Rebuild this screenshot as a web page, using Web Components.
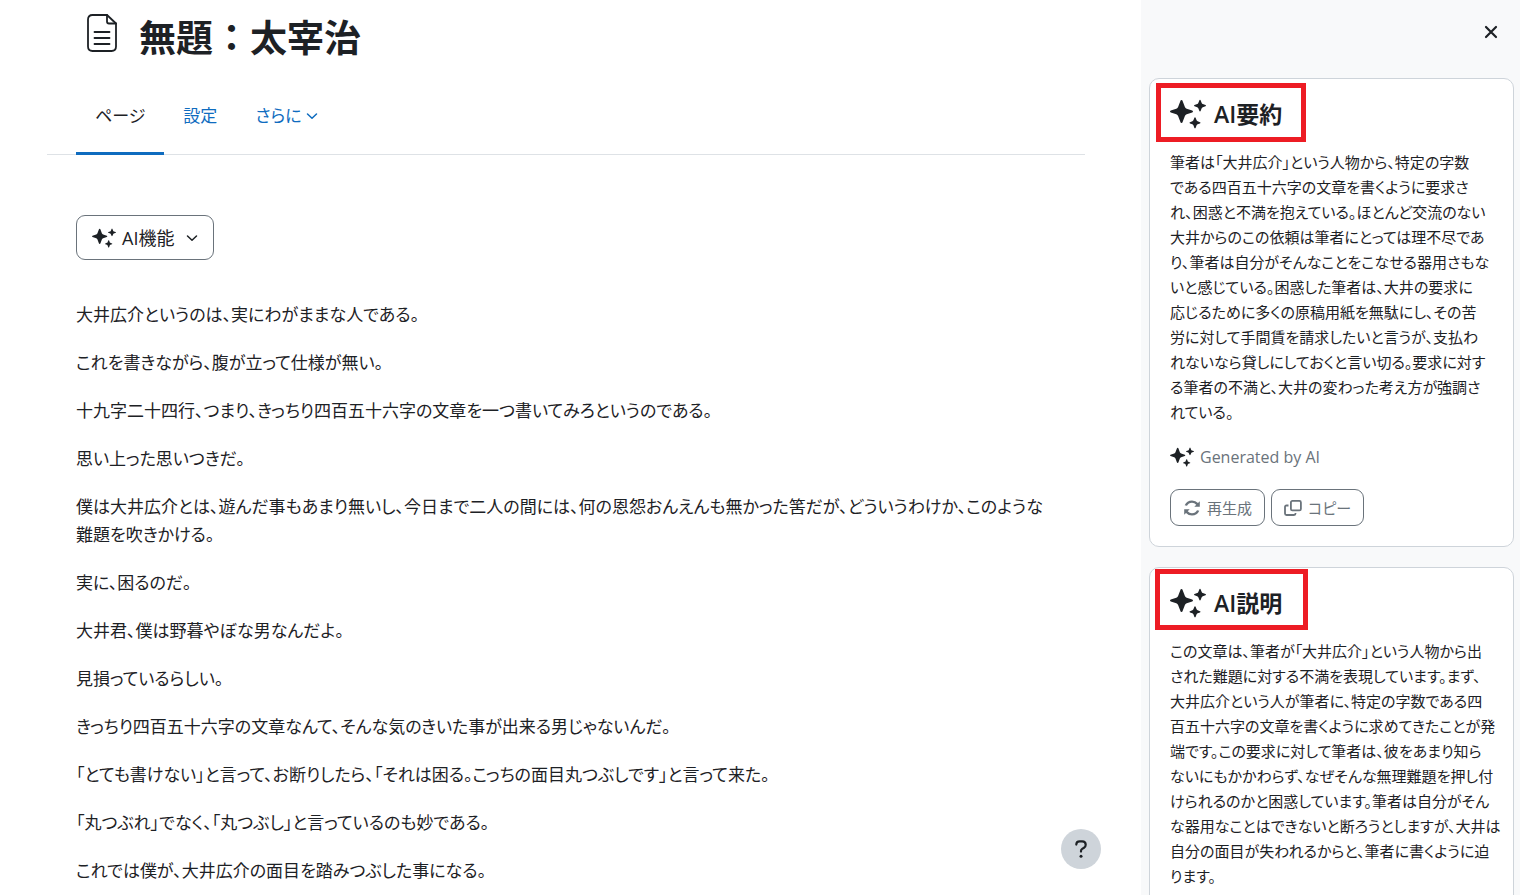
<!DOCTYPE html>
<html lang="ja">
<head>
<meta charset="utf-8">
<title>無題：太宰治</title>
<style>
    body {
        margin: 0;
        color: #1d2125;
        background: #fff;
        font-family: "Open Sans", "Noto Sans CJK JP", sans-serif;
        font-size: 17px;
        line-height: 28px;
        font-feature-settings: "palt";
    }
</style>
</head>
<body>

<template id="sparkle-icon">
    <style>
        :host { display: inline-block; flex: none; width: 24px; }
        :host([large]) { width: 36px; }
        svg { display: block; width: 100%; fill: #1d2125; }
    </style>
    <svg viewBox="0 0 36 30" aria-hidden="true">
        <path d="M11.5 1Q12.4 1 12.7 2.2L14.8 7.8Q15.3 9.2 16.7 9.7L22.2 11.6Q23 12 23 12.5Q23 13 22.2 13.4L16.7 15.3Q15.3 15.8 14.8 17.2L12.7 22.8Q12.4 24 11.5 24Q10.6 24 10.3 22.8L8.2 17.2Q7.7 15.8 6.3 15.3L.8 13.4Q0 13 0 12.5Q0 12 .8 11.6L6.3 9.7Q7.7 9.2 8.2 7.8L10.3 2.2Q10.6 1 11.5 1Z"/>
        <path d="M30 .8Q30.5.8 30.7 1.4L31.7 4Q32 4.8 32.8 5.1L35.5 6.1Q36 6.3 36 6.6Q36 7 35.5 7.2L32.8 8.2Q32 8.5 31.7 9.3L30.7 11.8Q30.5 12.4 30 12.4Q29.5 12.4 29.3 11.8L28.3 9.3Q28 8.5 27.2 8.2L24.5 7.2Q24 7 24 6.6Q24 6.3 24.5 6.1L27.2 5.1Q28 4.8 28.3 4L29.3 1.4Q29.5.8 30 .8Z"/>
        <path d="M25 18.3Q25.5 18.3 25.7 18.9L26.6 21.3Q26.9 22 27.6 22.3L30 23.2Q30.5 23.4 30.5 23.8Q30.5 24.2 30 24.4L27.6 25.3Q26.9 25.6 26.6 26.3L25.7 28.7Q25.5 29.3 25 29.3Q24.5 29.3 24.3 28.7L23.4 26.3Q23.1 25.6 22.4 25.3L20 24.4Q19.5 24.2 19.5 23.8Q19.5 23.4 20 23.2L22.4 22.3Q23.1 22 23.4 21.3L24.3 18.9Q24.5 18.3 25 18.3Z"/>
    </svg>
</template>

<template id="chevron-icon">
    <style>
        :host { display: inline-block; flex: none; width: 12px; }
        svg { display: block; width: 100%; }
    </style>
    <svg viewBox="0 0 12 8" fill="none" stroke="currentColor" stroke-width="1.5" stroke-linecap="round" stroke-linejoin="round" aria-hidden="true">
        <path d="M1.5 2L6 6.3L10.5 2"/>
    </svg>
</template>

<template id="page-header">
    <style>
        :host { display: flex; align-items: flex-start; gap: 22px; padding: 10px 40px 0; }
        svg { flex: none; width: 30px; margin-top: 4px; }
        h1 { margin: 0; font-size: 37px; line-height: 56px; font-weight: 700; font-feature-settings: normal; }
    </style>
    <svg viewBox="0 0 30 38" fill="none" stroke="#1d2125" stroke-width="1.8" stroke-linejoin="round" stroke-linecap="round" aria-hidden="true">
        <path d="M5.5 1H20L29 9.5V32.5Q29 37 24.5 37H5.5Q1 37 1 32.5V5.5Q1 1 5.5 1Z"/>
        <path d="M20 1V7.5Q20 9.5 22 9.5H29M7.5 18H22.5M7.5 24H22.5M7.5 30H22.5"/>
    </svg>
    <h1><slot></slot></h1>
</template>

<template id="tab-item">
    <style>
        :host { display: block; }
        a {
            display: flex;
            align-items: center;
            gap: 4px;
            padding: 24px 19px 22px;
            border-bottom: 3px solid transparent;
            color: #0f6cbf;
            text-decoration: none;
        }
        :host([active]) a { color: #1d2125; border-color: #0f6cbf; }
    </style>
    <a href="#"><slot></slot></a>
</template>

<template id="page-tabs">
    <style>
        :host { display: block; margin-top: 12px; border-bottom: 1px solid #dee2e6; }
        nav { display: flex; padding: 0 29px; margin-bottom: -1px; }
    </style>
    <nav><slot></slot></nav>
</template>

<template id="ai-menu">
    <style>
        :host { display: block; }
        button {
            display: flex;
            align-items: center;
            height: 45px;
            padding: 0 15px;
            border: 1px solid #6a737b;
            border-radius: 9px;
            background: #fff;
            color: inherit;
            font: inherit;
            font-size: 18px;
            font-feature-settings: inherit;
        }
        span { margin: 0 12px 0 6px; }
    </style>
    <button type="button" aria-haspopup="true">
        <sparkle-icon></sparkle-icon>
        <span><slot></slot></span>
        <chevron-icon></chevron-icon>
    </button>
</template>

<template id="story-text">
    <style>
        :host { display: block; }
        ::slotted(p) { margin: 0 0 20px; }
    </style>
    <slot></slot>
</template>

<template id="help-button">
    <style>
        :host { position: absolute; right: 40px; bottom: 26px; }
        button {
            display: flex;
            align-items: center;
            justify-content: center;
            width: 40px;
            height: 40px;
            padding: 0;
            border: 0;
            border-radius: 50%;
            background: #ced4da;
        }
    </style>
    <button type="button" aria-label="ヘルプ">
        <svg width="12" height="18" viewBox="0 0 12 18" fill="none" stroke="#1d2125" stroke-width="2.2" stroke-linecap="round" stroke-linejoin="round">
            <path d="M1.3 4.6Q1.3 1.3 4.6 1.3H7.2Q10.7 1.3 10.7 4.8Q10.7 6.8 9 7.8L7.2 8.9Q6 9.6 6 11V11.6"/>
            <circle cx="6" cy="16.2" r="1.5" fill="#1d2125" stroke="none"/>
        </svg>
    </button>
</template>

<template id="tool-button">
    <style>
        :host { display: block; }
        button {
            display: flex;
            align-items: center;
            gap: 6px;
            height: 37px;
            padding: 0 12px;
            border: 1px solid #6a737b;
            border-radius: 9px;
            background: #fff;
            color: #6a737b;
            font: inherit;
            font-size: 15px;
            font-feature-settings: inherit;
        }
    </style>
    <button type="button"><slot name="icon"></slot><slot></slot></button>
</template>

<template id="ai-card">
    <style>
        :host {
            display: block;
            padding: 17px 8px 20px 20px;
            border: 1px solid #ced4da;
            border-radius: 10px;
            background: #fff;
        }
        h2 {
            position: relative;
            display: flex;
            align-items: center;
            gap: 8px;
            width: fit-content;
            margin: 0 0 18px;
            font-size: 23px;
            line-height: 36px;
            font-weight: 600;
        }
        /* highlight frame drawn over the card heading */
        .frame {
            position: absolute;
            inset: var(--frame-inset, -13px -24px -10px -14px);
            border: 5px solid #ed1c24;
            pointer-events: none;
        }
        ::slotted(p) { margin: 0; font-size: 15px; line-height: 25px; }
    </style>
    <h2><sparkle-icon large></sparkle-icon><slot name="title"></slot><span class="frame"></span></h2>
    <slot></slot>
    <slot name="footer"></slot>
</template>

<template id="card-footer">
    <style>
        :host { display: block; }
        .note {
            display: flex;
            align-items: center;
            gap: 6px;
            margin: 20px 0;
            color: #6a737b;
            font-size: 16px;
            line-height: 24px;
        }
        .tools { display: flex; gap: 6px; }
    </style>
    <div class="note"><sparkle-icon></sparkle-icon>Generated by AI</div>
    <div class="tools">
        <tool-button>
            <svg slot="icon" width="18" height="16" viewBox="0 0 18 16" fill="currentColor" aria-hidden="true">
                <path d="M9 .5Q12.6.5 15 3.1L16.8 1.3V6.8H11.3L13.3 4.8Q11.5 2.8 9 2.8Q5.5 2.8 4 5.8L1.7 5.2Q3.7.5 9 .5Z"/>
                <path d="M9 15.5Q5.4 15.5 3 12.9L1.2 14.7V9.2H6.7L4.7 11.2Q6.5 13.2 9 13.2Q12.5 13.2 14 10.2L16.3 10.8Q14.3 15.5 9 15.5Z"/>
            </svg>再生成
        </tool-button>
        <tool-button>
            <svg slot="icon" width="18" height="16" viewBox="0 0 18 16" fill="none" stroke="currentColor" stroke-width="1.8" stroke-linejoin="round" aria-hidden="true">
                <rect x="6.9" y=".9" width="10" height="9.5" rx="1.5"/>
                <path d="M4.5 5.5H2.5Q1 5.5 1 7V13.5Q1 15 2.5 15H10Q11.5 15 11.5 13.5V13"/>
            </svg>コピー
        </tool-button>
    </div>
</template>

<template id="ai-drawer">
    <style>
        :host { display: block; }
        .top { display: flex; justify-content: flex-end; padding: 20px 17px 34px; }
        .top button {
            display: flex;
            align-items: center;
            justify-content: center;
            width: 24px;
            height: 24px;
            padding: 0;
            border: 0;
            background: none;
        }
        .cards { display: flex; flex-direction: column; gap: 20px; padding: 0 6px 0 8px; }
    </style>
    <div class="top">
        <button type="button" aria-label="閉じる">
            <svg width="14" height="14" viewBox="0 0 14 14" stroke="#1d2125" stroke-width="2.2" stroke-linecap="round"><path d="M2 2L12 12M12 2L2 12"/></svg>
        </button>
    </div>
    <div class="cards"><slot></slot></div>
</template>

<template id="course-page">
    <style>
        :host { display: flex; height: 100vh; overflow: hidden; }
        .main { position: relative; flex: 1; min-width: 0; overflow: hidden; }
        main { padding: 0 56px 0 47px; }
        .body { padding: 60px 29px 0; }
        .text { margin-top: 41px; }
        aside { flex: 0 0 379px; overflow: hidden; background: #f8f9fa; }
    </style>
    <div class="main">
        <main>
            <slot name="header"></slot>
            <slot name="tabs"></slot>
            <div class="body">
                <slot name="menu"></slot>
                <div class="text"><slot></slot></div>
            </div>
        </main>
        <help-button></help-button>
    </div>
    <aside><slot name="drawer"></slot></aside>
</template>

<course-page>
    <page-header slot="header">無題：太宰治</page-header>
    <page-tabs slot="tabs">
        <tab-item active>ページ</tab-item>
        <tab-item>設定</tab-item>
        <tab-item>さらに<chevron-icon></chevron-icon></tab-item>
    </page-tabs>
    <ai-menu slot="menu">AI機能</ai-menu>

    <story-text>
        <p>大井広介というのは、実にわがままな人である。</p>
        <p>これを書きながら、腹が立って仕様が無い。</p>
        <p>十九字二十四行、つまり、きっちり四百五十六字の文章を一つ書いてみろというのである。</p>
        <p>思い上った思いつきだ。</p>
        <p>僕は大井広介とは、遊んだ事もあまり無いし、今日まで二人の間には、何の恩怨おんえんも無かった筈だが、どういうわけか、このような<br>難題を吹きかける。</p>
        <p>実に、困るのだ。</p>
        <p>大井君、僕は野暮やぼな男なんだよ。</p>
        <p>見損っているらしい。</p>
        <p>きっちり四百五十六字の文章なんて、そんな気のきいた事が出来る男じゃないんだ。</p>
        <p>「とても書けない」と言って、お断りしたら、「それは困る。こっちの面目丸つぶしです」と言って来た。</p>
        <p>「丸つぶれ」でなく、「丸つぶし」と言っているのも妙である。</p>
        <p>これでは僕が、大井広介の面目を踏みつぶした事になる。</p>
    </story-text>

    <ai-drawer slot="drawer">
        <ai-card>
            <span slot="title">AI要約</span>
            <p>筆者は「大井広介」という人物から、特定の字数<br>である四百五十六字の文章を書くように要求さ<br>れ、困惑と不満を抱えている。ほとんど交流のない<br>大井からのこの依頼は筆者にとっては理不尽であ<br>り、筆者は自分がそんなことをこなせる器用さもな<br>いと感じている。困惑した筆者は、大井の要求に<br>応じるために多くの原稿用紙を無駄にし、その苦<br>労に対して手間賃を請求したいと言うが、支払わ<br>れないなら貸しにしておくと言い切る。要求に対す<br>る筆者の不満と、大井の変わった考え方が強調さ<br>れている。</p>
            <card-footer slot="footer"></card-footer>
        </ai-card>
        <ai-card style="--frame-inset: -16px -26px -9px -15px">
            <span slot="title">AI説明</span>
            <p>この文章は、筆者が「大井広介」という人物から出<br>された難題に対する不満を表現しています。まず、<br>大井広介という人が筆者に、特定の字数である四<br>百五十六字の文章を書くように求めてきたことが発<br>端です。この要求に対して筆者は、彼をあまり知ら<br>ないにもかかわらず、なぜそんな無理難題を押し付<br>けられるのかと困惑しています。筆者は自分がそん<br>な器用なことはできないと断ろうとしますが、大井は<br>自分の面目が失われるからと、筆者に書くように迫<br>ります。</p>
        </ai-card>
    </ai-drawer>
</course-page>

<script>
    // every element clones the template that carries its own name
    const define = (name) => {
        customElements.define(name, class extends HTMLElement {
            constructor() {
                super()
                const template = document.getElementById(name)
                this.attachShadow({ mode: 'open' })
                    .appendChild(template.content.cloneNode(true))
            }
        })
    }

    const names = [
        'sparkle-icon',
        'chevron-icon',
        'page-header',
        'tab-item',
        'page-tabs',
        'ai-menu',
        'story-text',
        'help-button',
        'tool-button',
        'ai-card',
        'card-footer',
        'ai-drawer',
        'course-page'
    ]

    names.forEach(define)
</script>
</body>
</html>
